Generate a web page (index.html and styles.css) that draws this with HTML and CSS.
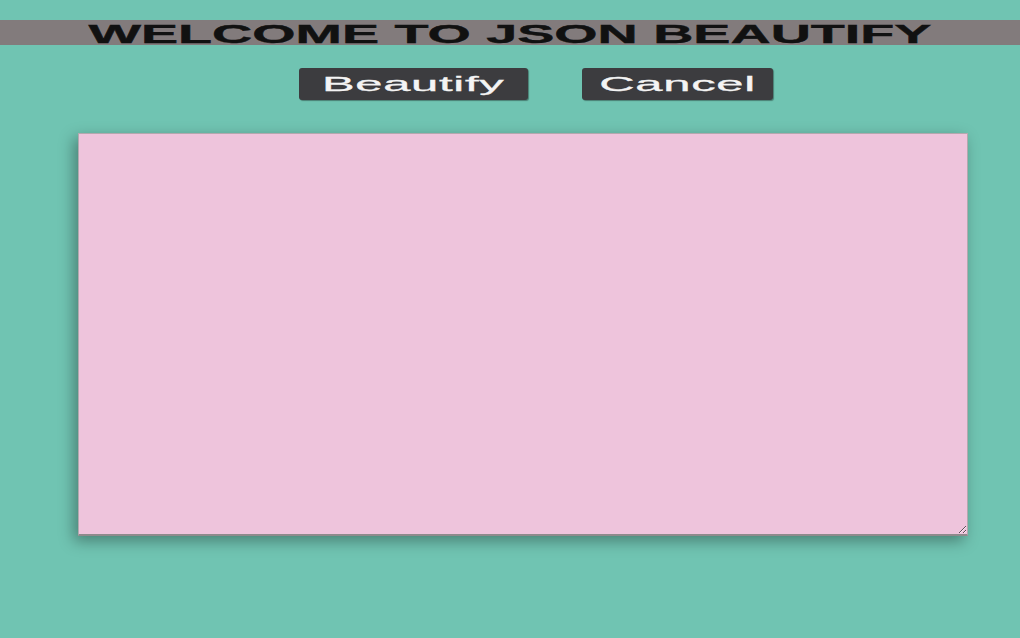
FILE: index.html
```html
<!DOCTYPE html>
<html>
<head>
<meta charset="utf-8">
<link rel="stylesheet" href="styles.css">
</head>
<body>
<div class="page">
  <div class="titlebar"><span class="title">WELCOME TO JSON BEAUTIFY</span></div>
  <div class="actions">
    <button class="btn btn-beautify"><span class="btn-label">Beautify</span></button>
    <button class="btn btn-cancel"><span class="btn-label">Cancel</span></button>
  </div>
  <div class="editor-wrap">
    <textarea class="editor"></textarea>
  </div>
</div>
</body>
</html>
```

FILE: styles.css
```css
html, body {
  margin: 0;
  padding: 0;
  background: #70c4b2;
  height: 100%;
  overflow: hidden;
}
.page {
  display: flex;
  flex-direction: column;
  font-family: "Liberation Sans", Arial, sans-serif;
  padding-top: 20px;
}
.titlebar {
  height: 25px;
  background: #827b7c;
  display: flex;
  justify-content: center;
  align-items: center;
}
.title {
  display: inline-block;
  font-weight: bold;
  font-size: 26px;
  line-height: 26px;
  color: #111;
  transform: scaleX(2.14);
  white-space: nowrap;
  margin-top: 3px;
  -webkit-text-stroke: 0.4px #111;
}
.actions {
  display: flex;
  justify-content: center;
  gap: 54px;
  padding-left: 52px;
  margin-top: 23px;
}
.btn {
  height: 32px;
  border: none;
  border-radius: 3px;
  background: #3c3c3f;
  color: #fff;
  font-family: "Liberation Sans", Arial, sans-serif;
  font-size: 21px;
  padding: 0;
  display: flex;
  justify-content: center;
  align-items: center;
  box-shadow: 1px 1px 1px rgba(0,0,0,0.35);
}
.btn-beautify { width: 229px; }
.btn-cancel { width: 191px; }
.btn-label {
  display: inline-block;
  transform: scaleX(2.33);
  letter-spacing: 0.3px;
  color: #f4f4f4;
  -webkit-text-stroke: 0.3px #f4f4f4;
}
.editor-wrap {
  display: flex;
  justify-content: flex-start;
  padding-left: 78px;
  margin-top: 33px;
}
.editor {
  width: 890px;
  height: 403px;
  box-sizing: border-box;
  margin: 0;
  background: #eec4dc;
  border: 1px solid #b3a8ae;
  border-bottom: 2px solid #8e8a8c;
  box-shadow: -4px 5px 14px rgba(0,0,0,0.35);
  resize: both;
  outline: none;
}
```
